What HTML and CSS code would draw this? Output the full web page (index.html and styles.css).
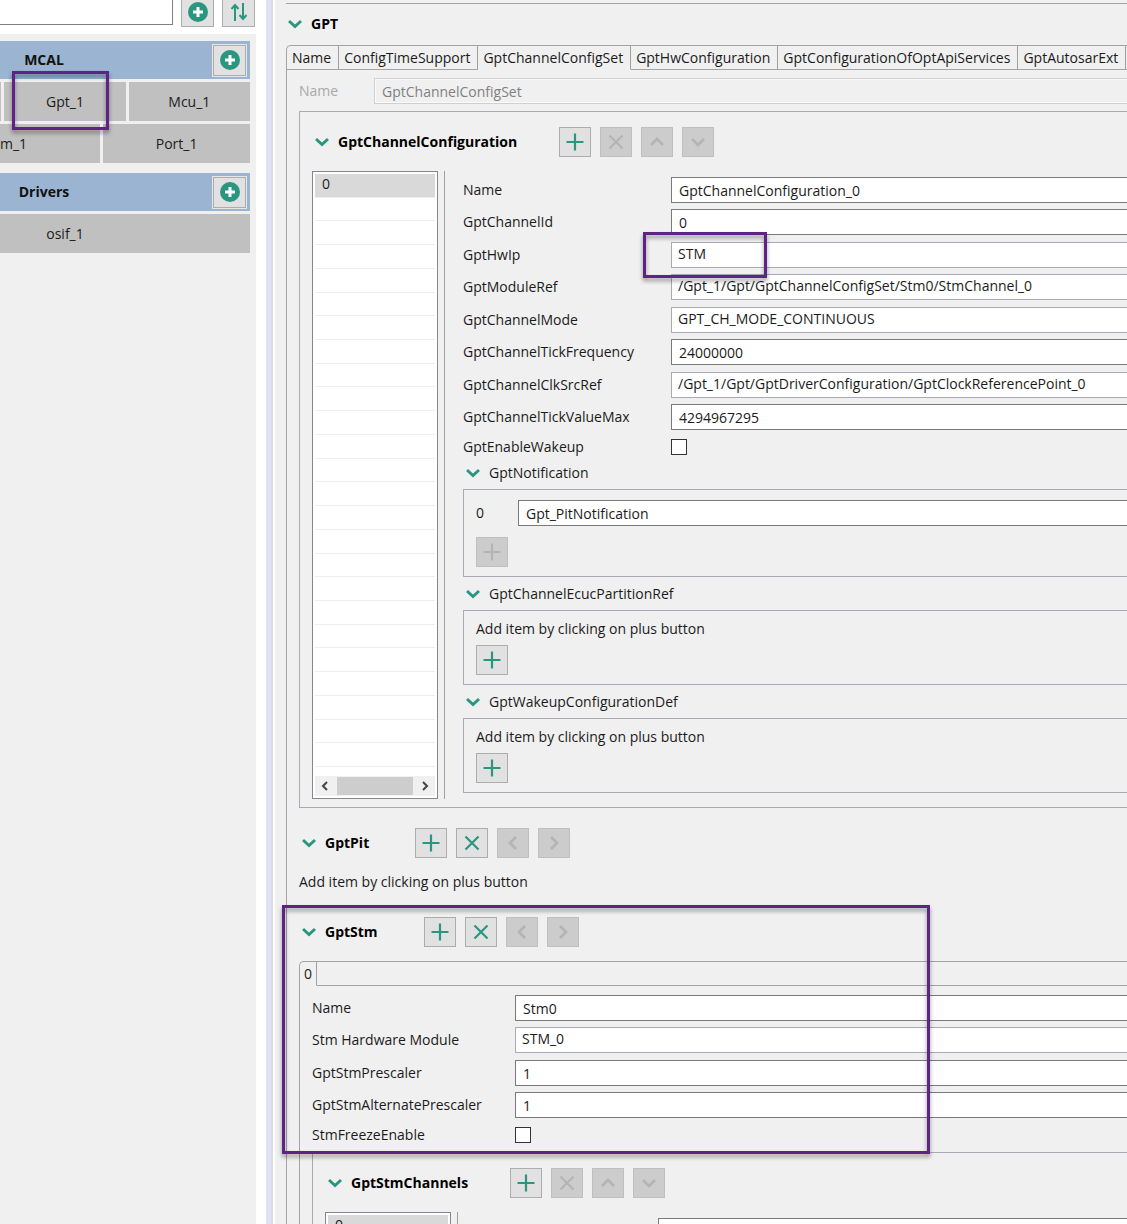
FILE: index.html
```html
<!DOCTYPE html>
<html lang="en">
<head>
<meta charset="utf-8">
<title>GPT configuration</title>
<link rel="stylesheet" href="styles.css">
</head>
<body>
<svg class="defs" aria-hidden="true">
  <symbol id="plus" viewBox="0 0 18 18"><path d="M9 0.5V17.5M0.5 9H17.5" fill="none" stroke="currentColor" stroke-width="2.2"/></symbol>
  <symbol id="cross" viewBox="0 0 18 18"><path d="M2.500 2.500L15.500 15.500M15.500 2.500L2.500 15.500" fill="none" stroke="currentColor" stroke-width="2.2"/></symbol>
  <symbol id="up" viewBox="0 0 18 18"><path d="M3 12L9 6L15 12" fill="none" stroke="currentColor" stroke-width="2.800"/></symbol>
  <symbol id="down" viewBox="0 0 18 18"><path d="M3 6L9 12L15 6" fill="none" stroke="currentColor" stroke-width="2.800"/></symbol>
  <symbol id="left" viewBox="0 0 18 18"><path d="M12 3L6 9L12 15" fill="none" stroke="currentColor" stroke-width="2.800"/></symbol>
  <symbol id="right" viewBox="0 0 18 18"><path d="M6 3L12 9L6 15" fill="none" stroke="currentColor" stroke-width="2.800"/></symbol>
  <symbol id="chevron" viewBox="0 0 14 10"><path d="M1 2L7 7.500L13 2" fill="none" stroke="currentColor" stroke-width="3"/></symbol>
  <symbol id="add" viewBox="0 0 20 20"><circle cx="10" cy="10" r="10" fill="currentColor"/><path d="M10 5V15M5 10H15" stroke="#fff" stroke-width="3"/></symbol>
  <symbol id="sort" viewBox="0 0 18 20"><path d="M5 19V3M1.500 7L5 3L8.500 7M13 1V17M9.500 13L13 17L16.500 13" fill="none" stroke="currentColor" stroke-width="2"/></symbol>
  <symbol id="scroll-left" viewBox="0 0 10 10"><path d="M7 1L3 5L7 9" fill="none" stroke="currentColor" stroke-width="2"/></symbol>
  <symbol id="scroll-right" viewBox="0 0 10 10"><path d="M3 1L7 5L3 9" fill="none" stroke="currentColor" stroke-width="2"/></symbol>
</svg>
<div class="app">
  <aside class="sidebar">
    <div class="search">
      <input class="search-box" type="text" aria-label="Search components">
      <button class="tool" aria-label="Add component"><svg class="i20"><use href="#add"/></svg></button>
      <button class="tool" aria-label="Sort"><svg class="i20"><use href="#sort"/></svg></button>
    </div>
    <div class="components">
      <section class="category">
        <div class="category-head"><h2>MCAL</h2><button class="tool" aria-label="Add MCAL component"><svg class="i20"><use href="#add"/></svg></button></div>
        <div class="cells thirds"><span class="cell"></span><button class="cell">Gpt_1</button><button class="cell">Mcu_1</button></div>
        <div class="cells pair"><button class="cell cut">m_1</button><button class="cell">Port_1</button></div>
      </section>
      <section class="category">
        <div class="category-head"><h2>Drivers</h2><button class="tool" aria-label="Add driver"><svg class="i20"><use href="#add"/></svg></button></div>
        <div class="cells"><button class="cell">osif_1</button></div>
      </section>
    </div>
  </aside>
  <div class="splitter"></div>
  <main class="editor">
    <h1 class="title"><svg class="chev"><use href="#chevron"/></svg>GPT</h1>
    <div class="tabs" role="tablist">
      <button role="tab">Name</button><button role="tab">ConfigTimeSupport</button><button role="tab" class="active" aria-selected="true">GptChannelConfigSet</button><button role="tab">GptHwConfiguration</button><button role="tab">GptConfigurationOfOptApiServices</button><button role="tab">GptAutosarExt</button><span class="tab-rest"></span>
    </div>
    <div class="pane">
      <div class="set-name"><label for="set">Name</label><input id="set" type="text" value="GptChannelConfigSet" disabled></div>

      <section class="group">
        <header class="group-head">
          <h2><svg class="chev"><use href="#chevron"/></svg>GptChannelConfiguration</h2>
          <div class="actions">
            <button class="act" aria-label="Add"><svg class="i18"><use href="#plus"/></svg></button>
            <button class="act" aria-label="Remove" disabled><svg class="i18"><use href="#cross"/></svg></button>
            <button class="act" aria-label="Move up" disabled><svg class="i18"><use href="#up"/></svg></button>
            <button class="act" aria-label="Move down" disabled><svg class="i18"><use href="#down"/></svg></button>
          </div>
        </header>
        <div class="split">
          <div class="list">
            <ul class="rows">
              <li class="selected">0</li><li></li><li></li><li></li><li></li><li></li><li></li><li></li><li></li><li></li><li></li><li></li><li></li><li></li><li></li><li></li><li></li><li></li><li></li><li></li><li></li><li></li><li></li><li></li><li></li>
            </ul>
            <div class="scrollbar"><svg class="i10"><use href="#scroll-left"/></svg><span class="thumb"></span><svg class="i10"><use href="#scroll-right"/></svg></div>
          </div>
          <div class="detail">
            <div class="form channel">
              <div class="field"><label for="c1">Name</label><input id="c1" type="text" value="GptChannelConfiguration_0"></div>
              <div class="field"><label for="c2">GptChannelId</label><input id="c2" type="text" value="0"></div>
              <div class="field"><label for="c3">GptHwIp</label><select id="c3"><option>STM</option></select></div>
              <div class="field"><label for="c4">GptModuleRef</label><select id="c4"><option>/Gpt_1/Gpt/GptChannelConfigSet/Stm0/StmChannel_0</option></select></div>
              <div class="field"><label for="c5">GptChannelMode</label><select id="c5"><option>GPT_CH_MODE_CONTINUOUS</option></select></div>
              <div class="field"><label for="c6">GptChannelTickFrequency</label><input id="c6" type="text" value="24000000"></div>
              <div class="field"><label for="c7">GptChannelClkSrcRef</label><select id="c7"><option>/Gpt_1/Gpt/GptDriverConfiguration/GptClockReferencePoint_0</option></select></div>
              <div class="field"><label for="c8">GptChannelTickValueMax</label><input id="c8" type="text" value="4294967295"></div>
              <div class="field check"><label for="c9">GptEnableWakeup</label><input id="c9" type="checkbox"></div>
            </div>
            <h3><svg class="chev"><use href="#chevron"/></svg>GptNotification</h3>
            <div class="box">
              <div class="item"><label for="n0">0</label><input id="n0" type="text" value="Gpt_PitNotification"></div>
              <button class="act" aria-label="Add notification" disabled><svg class="i18"><use href="#plus"/></svg></button>
            </div>
            <h3><svg class="chev"><use href="#chevron"/></svg>GptChannelEcucPartitionRef</h3>
            <div class="box">
              <p>Add item by clicking on plus button</p>
              <button class="act" aria-label="Add partition reference"><svg class="i18"><use href="#plus"/></svg></button>
            </div>
            <h3><svg class="chev"><use href="#chevron"/></svg>GptWakeupConfigurationDef</h3>
            <div class="box">
              <p>Add item by clicking on plus button</p>
              <button class="act" aria-label="Add wakeup configuration"><svg class="i18"><use href="#plus"/></svg></button>
            </div>
          </div>
        </div>
      </section>

      <header class="group-head bare">
        <h2><svg class="chev"><use href="#chevron"/></svg>GptPit</h2>
        <div class="actions">
          <button class="act" aria-label="Add"><svg class="i18"><use href="#plus"/></svg></button>
          <button class="act" aria-label="Remove"><svg class="i18"><use href="#cross"/></svg></button>
          <button class="act" aria-label="Previous" disabled><svg class="i18"><use href="#left"/></svg></button>
          <button class="act" aria-label="Next" disabled><svg class="i18"><use href="#right"/></svg></button>
        </div>
      </header>
      <p class="hint">Add item by clicking on plus button</p>

      <header class="group-head bare stm-head">
        <h2><svg class="chev"><use href="#chevron"/></svg>GptStm</h2>
        <div class="actions">
          <button class="act" aria-label="Add"><svg class="i18"><use href="#plus"/></svg></button>
          <button class="act" aria-label="Remove"><svg class="i18"><use href="#cross"/></svg></button>
          <button class="act" aria-label="Previous" disabled><svg class="i18"><use href="#left"/></svg></button>
          <button class="act" aria-label="Next" disabled><svg class="i18"><use href="#right"/></svg></button>
        </div>
      </header>
      <div class="tabs inner" role="tablist"><button role="tab" class="active" aria-selected="true">0</button><span class="tab-rest"></span></div>
      <div class="pane stm">
        <div class="form module">
          <div class="field"><label for="s1">Name</label><input id="s1" type="text" value="Stm0"></div>
          <div class="field"><label for="s2">Stm Hardware Module</label><select id="s2"><option>STM_0</option></select></div>
          <div class="field"><label for="s3">GptStmPrescaler</label><input id="s3" type="text" value="1"></div>
          <div class="field"><label for="s4">GptStmAlternatePrescaler</label><input id="s4" type="text" value="1"></div>
          <div class="field check"><label for="s5">StmFreezeEnable</label><input id="s5" type="checkbox"></div>
        </div>
        <section class="group">
          <header class="group-head">
            <h2><svg class="chev"><use href="#chevron"/></svg>GptStmChannels</h2>
            <div class="actions">
              <button class="act" aria-label="Add"><svg class="i18"><use href="#plus"/></svg></button>
              <button class="act" aria-label="Remove" disabled><svg class="i18"><use href="#cross"/></svg></button>
              <button class="act" aria-label="Move up" disabled><svg class="i18"><use href="#up"/></svg></button>
              <button class="act" aria-label="Move down" disabled><svg class="i18"><use href="#down"/></svg></button>
            </div>
          </header>
          <div class="split">
            <div class="list"><ul class="rows short"><li class="selected">0</li></ul></div>
            <div class="detail"><div class="form stm-channel"><div class="field"><span></span><input type="text" aria-label="Channel name"></div></div></div>
          </div>
        </section>
      </div>
    </div>
  </main>
  <div class="mark mark-gpt"></div>
  <div class="mark mark-hwip"></div>
  <div class="mark mark-stm"></div>
</div>
</body>
</html>
```
FILE: styles.css
```css
* { box-sizing: border-box; }
body, h1, h2, h3, p, ul { margin: 0; padding: 0; }
body { font: 14px/20px "Open Sans", "Noto Sans", sans-serif; color: #1b1b1b; background: #f0f0f0; }
button, input, select { font: inherit; color: inherit; margin: 0; border-radius: 0; }
svg { display: block; flex: none; }
.defs { position: absolute; width: 0; height: 0; }
.i20 { width: 20px; height: 20px; color: #2b9680; }
.i18 { width: 18px; height: 18px; }
.i10 { width: 10px; height: 10px; color: #444; }
.chev { width: 14px; height: 10px; color: #2b9680; }

.app { position: relative; display: flex; height: 100vh; overflow: hidden; }

/* component browser */
.sidebar { flex: none; width: 266px; background: #fff; overflow: hidden; display: flex; flex-direction: column; }
.search { display: flex; gap: 8px; height: 34px; align-items: flex-start; }
.search-box { width: 173px; height: 25px; border: 1px solid #808080; border-width: 0 1px 1px 0; background: #fff; }
.tool { flex: none; width: 33px; height: 31px; padding: 0; display: flex; align-items: center; justify-content: center; background: #e1e1e1; border: 1px solid #adadad; }
.search .tool { height: 27px; align-items: flex-start; border-top: 0; padding-top: 2px; }
.components { flex: 1; margin: 0 10px 0 -120px; padding: 7px 6px 0 0; background: #f0f0f0; display: flex; flex-direction: column; gap: 10px; }
.category { display: flex; flex-direction: column; gap: 3px; }
.category-head { height: 38px; padding-right: 4px; display: flex; align-items: center; background: #9ab4d2; }
.category-head h2 { flex: 1; padding-right: 5px; text-align: center; font-size: 14px; font-weight: 700; color: #111; }
.category-head .tool { box-shadow: 0 0 0 1px #e6e6e6; }
.cells { display: grid; grid-template-columns: 1fr; gap: 3px; height: 39px; }
.thirds { grid-template-columns: 1fr 1fr 1fr; }
.pair { grid-template-columns: 3fr 2fr; }
.cell { padding: 0; border: 0; background: #c0c0c0; text-align: center; }
.cut { text-align: left; padding-left: 120px; }
.splitter { flex: none; width: 9px; background: linear-gradient(to right, #dfe3f5 5px, #dcdcdc 5px, #dcdcdc 7px, #fff 7px); }

/* editor */
.editor { flex: 1; min-width: 0; padding: 3px 0 0 11px; }
.title { height: 42px; border-top: 1px solid #a4a4a4; display: flex; align-items: center; gap: 9px; padding: 0 0 2px 2px; font-size: 14px; font-weight: 700; color: #000; }
.tabs { display: flex; height: 25px; overflow: hidden; border-top: 1px solid #a4a4a4; border-left: 1px solid #a4a4a4; border-top-left-radius: 5px; }
.tabs button { flex: none; padding: 0 7px 0 5px; background: none; border: 0; border-right: 1px solid #a0a0a0; border-bottom: 1px solid #a4a4a4; white-space: nowrap; }
.tabs .active { border-bottom-color: transparent; }
.inner { margin-top: 14px; }
.tabs.inner button { padding: 0 4px; }
.tab-rest { flex: 1; border-bottom: 1px solid #a4a4a4; }
.pane { border-left: 1px solid #a4a4a4; padding: 8px 0 0 12px; }
.set-name { display: grid; grid-template-columns: 75px 1fr; align-items: center; color: #a8a8a8; }
.set-name input { border: 1px solid #cfcfcf; border-right: 0; background: #f0f0f0; height: 26px; padding: 0 7px; color: #808080; box-shadow: inset 1px 1px #fafafa, inset 0 -1px #fafafa; }

.group { margin-top: 7px; border: 1px solid #a8abb4; border-right: 0; padding: 15px 0 8px 12px; }
.group-head { display: flex; align-items: center; height: 30px; gap: 42px; padding-left: 3px; }
.group-head h2 { display: flex; align-items: center; gap: 9px; font-size: 14px; font-weight: 700; color: #000; }
.actions { display: flex; gap: 9px; }
.act { width: 32px; height: 30px; padding: 0; display: flex; align-items: center; justify-content: center; background: #e1e1e1; border: 1px solid #adadad; color: #2b9680; }
.act:disabled { background: #ccc; border-color: #bfbfbf; color: #b4b4b4; }
.bare { margin-top: 20px; gap: 46px; }
.hint { margin-top: 14px; }
.stm-head { margin-top: 25px; }

.split { display: flex; margin-top: 14px; }
.list { flex: none; width: 126px; border: 1px solid #828790; background: #fff; padding: 2px; display: flex; flex-direction: column; }
.rows { list-style: none; height: 593px; display: flex; flex-direction: column; }
.rows li { flex: 1; border-bottom: 1px solid #eee; }
.rows .selected { background: #d9d9d9; padding-left: 7px; }
.rows.short { height: 24px; }
.scrollbar { margin-top: auto; height: 20px; background: #f0f0f0; display: flex; align-items: center; justify-content: space-between; padding: 0 5px; }
.thumb { width: 76px; height: 18px; background: #cdcdcd; }
.detail { flex: 1; min-width: 0; margin-left: 6px; border-left: 1px solid #a0a0a0; padding: 6px 0 6px 18px; }

.field { display: grid; align-items: center; height: 32px; padding-bottom: 6px; }
.field:nth-child(even) { height: 33px; padding-bottom: 7px; }
.channel .field { grid-template-columns: 208px 1fr; }
.module .field { grid-template-columns: 203px 1fr; }
.stm-channel .field { grid-template-columns: 182px 1fr; }
.field input[type=text], .field select, .item input { width: 100%; height: 26px; border: 1px solid #7a7a7a; border-right: 0; background: #fff; padding: 0 7px; }
.field select { appearance: none; border-color: #a8abb4; padding: 0 6px 2px; }
.field.check { height: 27px; padding-bottom: 0; align-items: start; }
.check input { appearance: none; width: 16px; height: 16px; border: 1px solid #333; background: #fff; margin-top: 2px; }

h3 { display: flex; align-items: center; gap: 9px; height: 33px; padding-left: 3px; font-size: 14px; font-weight: 400; }
.box { border: 1px solid #a8abb4; border-right: 0; padding: 8px 0 9px 12px; }
.box p { height: 26px; }
.item { display: grid; grid-template-columns: 42px 1fr; align-items: center; margin: 2px 0 11px; }
.form + h3 { height: 25px; padding-bottom: 8px; }

.stm { padding-top: 9px; }
.stm .group { margin-top: 0; }

/* highlight frames drawn over the window */
.mark { position: absolute; border: 3px solid #5f2387; filter: drop-shadow(0 3px 2px rgba(0, 0, 0, .4)); pointer-events: none; }
.mark-gpt { left: 12px; top: 71px; width: 97px; height: 59px; }
.mark-hwip { left: 643px; top: 232px; width: 124px; height: 46px; }
.mark-stm { left: 282px; top: 905px; width: 648px; height: 249px; }
```
